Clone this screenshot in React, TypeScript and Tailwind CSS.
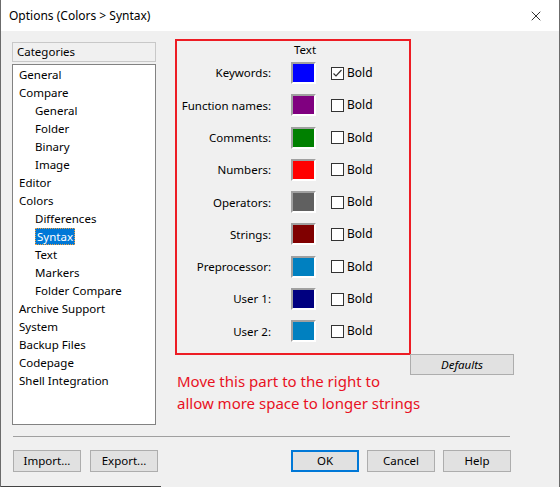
import { X } from "lucide-react";

const categories = [
  { label: "General", level: 0 },
  { label: "Compare", level: 0 },
  { label: "General", level: 1 },
  { label: "Folder", level: 1 },
  { label: "Binary", level: 1 },
  { label: "Image", level: 1 },
  { label: "Editor", level: 0 },
  { label: "Colors", level: 0 },
  { label: "Differences", level: 1 },
  { label: "Syntax", level: 1, selected: true },
  { label: "Text", level: 1 },
  { label: "Markers", level: 1 },
  { label: "Folder Compare", level: 1 },
  { label: "Archive Support", level: 0 },
  { label: "System", level: 0 },
  { label: "Backup Files", level: 0 },
  { label: "Codepage", level: 0 },
  { label: "Shell Integration", level: 0 },
];

const syntaxRows = [
  { label: "Keywords:", color: "#0000ff", bold: true },
  { label: "Function names:", color: "#800080", bold: false },
  { label: "Comments:", color: "#008000", bold: false },
  { label: "Numbers:", color: "#ff0000", bold: false },
  { label: "Operators:", color: "#606060", bold: false },
  { label: "Strings:", color: "#800000", bold: false },
  { label: "Preprocessor:", color: "#0080c0", bold: false },
  { label: "User 1:", color: "#000080", bold: false },
  { label: "User 2:", color: "#0080c0", bold: false },
];

function Button({ label, primary = false, className = "" }: { label: string; primary?: boolean; className?: string }) {
  return (
    <button
      className={
        "flex h-[22px] w-[68px] items-center justify-center bg-[#e1e1e1] text-black " +
        (primary ? "border-2 border-[#0078d7]" : "border border-[#adadad]") +
        " " +
        className
      }
    >
      {label}
    </button>
  );
}

export default function App() {
  return (
    <div
      className="relative h-[487px] w-[560px] overflow-hidden border-l border-r border-[#6b6b6b] bg-[#f0f0f0] text-[11.5px] text-black"
      style={{ fontFamily: '"Segoe UI", "Noto Sans", sans-serif' }}
    >
      {/* title bar */}
      <div className="flex h-[31px] items-center justify-between bg-white pl-[8px] pr-[15px]">
        <span className="text-[12px]">Options (Colors &gt; Syntax)</span>
        <X size={16} strokeWidth={1.2} />
      </div>

      <div className="flex pl-[11px] pt-[11px]">
        {/* categories */}
        <div className="flex w-[144px] flex-col">
          <div className="flex h-[20px] items-center border border-[#c8c8c8] bg-[#f0f0f0] pl-[4px]">Categories</div>
          <div className="mt-[2px] h-[361px] border border-[#828282] bg-white">
            {categories.map((c, i) => (
              <div key={i} className={"flex h-[18px] items-center " + (c.level ? "pl-[22px]" : "pl-[6px]")}>
                <span
                  className={
                    c.selected
                      ? "border border-dotted border-[#f0a040] bg-[#0078d7] px-[1px] leading-[15px] text-white"
                      : "leading-[15px]"
                  }
                >
                  {c.label}
                </span>
              </div>
            ))}
          </div>
        </div>

        {/* syntax panel */}
        <div className="ml-[19px] flex flex-col">
          <div className="-mt-[3px] flex h-[316px] w-[236px] flex-col border-2 border-[#ed1c24] pt-[1px]">
            <div className="ml-[113px] w-[30px] text-center leading-[16px]">Text</div>
            <div className="mt-[4px] flex flex-col gap-[10.3px]">
              {syntaxRows.map((r) => (
                <div key={r.label} className="flex h-[22px] items-center">
                  <span className="w-[94px] text-right">{r.label}</span>
                  <span
                    className="ml-[20px] h-[22px] w-[25px] border-2 border-t-[#a0a0a0] border-l-[#a0a0a0] border-b-white border-r-white"
                    style={{ backgroundColor: r.color }}
                  />
                  <span className="ml-[15px] flex h-[13px] w-[13px] items-center justify-center border border-[#333] bg-white">
                    {r.bold && (
                      <svg width="11" height="11" viewBox="0 0 11 11">
                        <path d="M1.5 5.5 L4 8 L9.5 2" fill="none" stroke="#333" strokeWidth="1.2" />
                      </svg>
                    )}
                  </span>
                  <span className="ml-[3px] text-[12px]">Bold</span>
                </div>
              ))}
            </div>
          </div>
          <div className="flex flex-col pl-[2px] pt-[15px] text-[15px] leading-[22px] text-[#e81123]">
            <span>Move this part to the right to</span>
            <span>allow more space to longer strings</span>
          </div>
        </div>
      </div>

      <button className="absolute left-[409px] top-[354px] flex h-[21px] w-[104px] items-center justify-center border border-[#adadad] bg-[#e1e1e1] italic">
        Defaults
      </button>

      {/* separator */}
      <div className="absolute left-[12px] top-[436px] h-[1px] w-[497px] bg-[#a0a0a0]" />

      {/* bottom buttons */}
      <div className="absolute left-[12px] top-[450px] flex w-[498px]">
        <Button label="Import..." />
        <Button label="Export..." className="ml-[9px]" />
        <Button label="OK" primary className="ml-auto" />
        <Button label="Cancel" className="ml-[8px]" />
        <Button label="Help" className="ml-[8px]" />
      </div>

      <div className="absolute bottom-0 left-0 h-[1px] w-[160px] bg-[#444]" />
    </div>
  );
}
